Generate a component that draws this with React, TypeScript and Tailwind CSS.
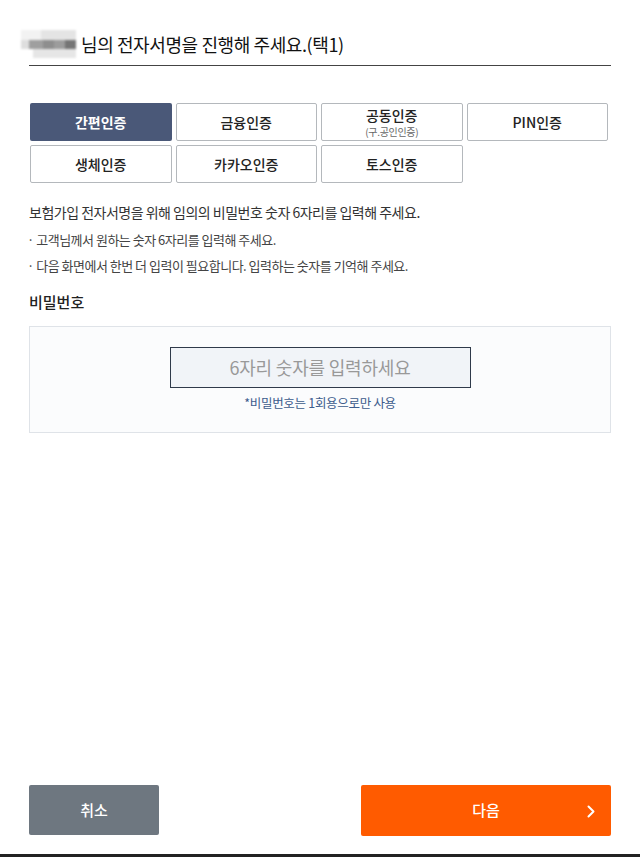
import React from 'react';

const methods = [
    { label: '간편인증', active: true },
    { label: '금융인증' },
    { label: '공동인증', sub: '(구.공인인증)' },
    { label: 'PIN인증' },
    { label: '생체인증' },
    { label: '카카오인증' },
    { label: '토스인증' },
];

const BlurredName: React.FC = () => (
    <span className="inline-flex flex-col w-[55px] h-[28px] blur-[1px] mr-[5px]">
        <span className="h-[10px] flex">
            <span className="w-[20px] bg-[#f2f2f2]" />
            <span className="flex-1 bg-[#e4e4e4]" />
        </span>
        <span className="h-[9px] flex">
            <span className="w-[8px] bg-[#dedede]" />
            <span className="w-[14px] bg-[#9f9f9f]" />
            <span className="w-[11px] bg-[#8e8e8e]" />
            <span className="w-[11px] bg-[#9c9c9c]" />
            <span className="flex-1 bg-[#757575]" />
        </span>
        <span className="h-[9px] flex">
            <span className="w-[12px] bg-white" />
            <span className="flex-1 bg-[#e6e6e6]" />
        </span>
    </span>
);

export default function App() {
    return (
        <div
            className="h-[857px] w-full flex flex-col bg-white text-[#222]"
            style={{ fontFamily: '"Noto Sans CJK KR", "Noto Sans", sans-serif' }}
        >
            {/* Title */}
            <div className="pt-[30px] pl-[21px] flex items-center h-[57px]">
                <BlurredName />
                <h1 className="text-[18px] leading-[26px] text-[#111] tracking-[-0.4px]">님의 전자서명을 진행해 주세요.(택1)</h1>
            </div>
            <div className="mx-[29px] mt-[8px] h-px bg-[#444]" />

            {/* Auth methods */}
            <div className="mx-[29px] mt-[37px] pl-px pr-[3px] grid grid-cols-4 gap-[4px]">
                {methods.map((m) => (
                    <button
                        key={m.label}
                        className={
                            m.active
                                ? 'h-[38px] rounded-[2px] bg-[#4a5878] text-white text-[14px] font-bold flex flex-col items-center justify-center'
                                : 'h-[38px] rounded-[2px] bg-white border border-[#b4b8bc] text-[#222] text-[14px] font-medium flex flex-col items-center justify-center'
                        }
                    >
                        <span className="leading-[16px]">{m.label}</span>
                        {m.sub && <span className="mt-[3px] text-[10px] leading-[11px] text-[#666] font-normal tracking-[-0.3px]">{m.sub}</span>}
                    </button>
                ))}
            </div>

            {/* Guide */}
            <p className="mx-[29px] mt-[19px] text-[14px] leading-[20px] text-[#333] tracking-[-0.5px]">
                보험가입 전자서명을 위해 임의의 비밀번호 숫자 6자리를 입력해 주세요.
            </p>
            <ul className="mx-[27px] mt-[5px] text-[13px] leading-[26px] text-[#444] tracking-[-0.5px]">
                <li>· 고객님께서 원하는 숫자 6자리를 입력해 주세요.</li>
                <li>· 다음 화면에서 한번 더 입력이 필요합니다. 입력하는 숫자를 기억해 주세요.</li>
            </ul>

            <h2 className="mx-[29px] mt-[12px] text-[15px] leading-[22px] font-medium text-[#222]">비밀번호</h2>

            <div className="mx-[29px] mt-[13px] h-[107px] border border-[#dfe3e8] bg-[#fbfcfd] flex flex-col items-center pt-[20px]">
                <div className="w-[301px] h-[41px] border border-[#2f3a4a] bg-[#f1f4f8] flex items-center justify-center text-[18px] text-[#999] tracking-[-0.2px]">
                    6자리 숫자를 입력하세요
                </div>
                <p className="mt-[6px] text-[12.5px] leading-[18px] text-[#3b5b8c] tracking-[-0.3px]">*비밀번호는 1회용으로만 사용</p>
            </div>

            {/* Footer buttons */}
            <div className="mt-auto mx-[29px] mb-[18px] flex justify-between items-start">
                <button className="w-[130px] h-[50px] rounded-[2px] bg-[#6e7780] text-white text-[15px] font-medium">취소</button>
                <button className="relative w-[250px] h-[51px] rounded-[2px] bg-[#ff5b00] text-white text-[15px] font-medium flex items-center justify-center">
                    다음
                    <svg className="absolute right-[16px] top-[20px] w-[8px] h-[13px]" viewBox="0 0 8 13" fill="none" stroke="currentColor">
                        <polyline points="1.5,1.5 6.5,6.5 1.5,11.5" strokeWidth={2} strokeLinecap="round" strokeLinejoin="round" />
                    </svg>
                </button>
            </div>
            <div className="h-[3px] bg-[#222]" />
        </div>
    );
}
